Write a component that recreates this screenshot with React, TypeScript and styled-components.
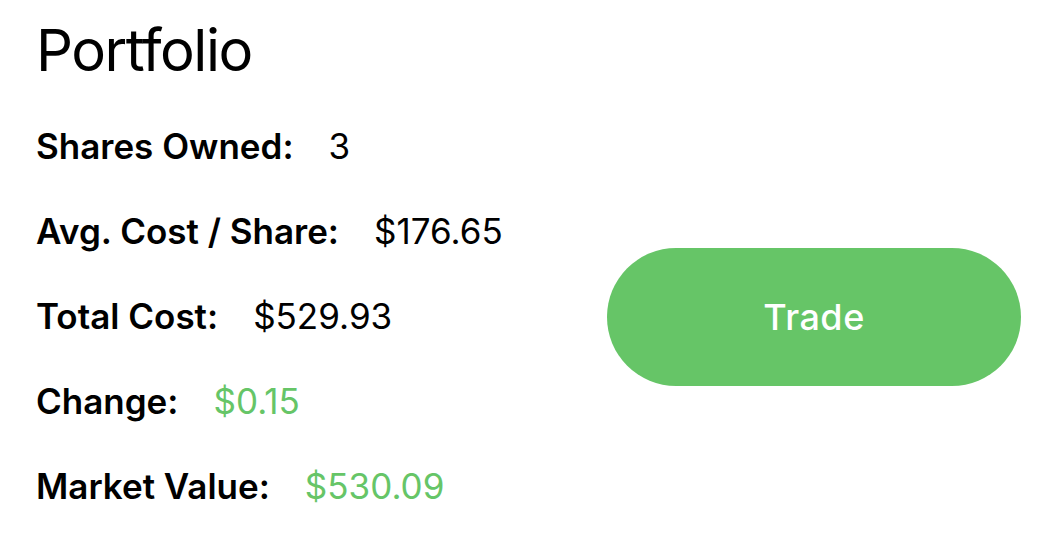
import React from "react";
import styled, { createGlobalStyle } from "styled-components";

const Global = createGlobalStyle`
  html, body { margin: 0; padding: 0; background: #ffffff; }
  body { font-family: Inter, "Noto Sans", "Liberation Sans", sans-serif; color: #000; }
`;

const Page = styled.div`
  width: 1048px;
  height: 534px;
  box-sizing: border-box;
  padding: 16px 27px 0 36px;
  display: flex;
  flex-direction: column;
`;

const Title = styled.h1`
  margin: 0;
  font-size: 58px;
  font-weight: 400;
  line-height: 68px;
  letter-spacing: -1.5px;
`;

const Body = styled.div`
  display: flex;
  align-items: center;
  justify-content: space-between;
  margin-top: 42px;
`;

const List = styled.div`
  display: flex;
  flex-direction: column;
  gap: 44px;
`;

const Row = styled.div`
  display: flex;
  align-items: baseline;
  gap: 35px;
  font-size: 35px;
  line-height: 41px;
`;

const Label = styled.span`
  font-weight: 600;
`;

const Value = styled.span<{ $positive?: boolean }>`
  font-weight: 400;
  color: ${(p) => (p.$positive ? "#66c567" : "#000")};
`;

const TradeButton = styled.button`
  width: 414px;
  height: 138px;
  border: none;
  border-radius: 69px;
  background: #66c567;
  color: #fff;
  font-family: inherit;
  font-size: 36px;
  font-weight: 500;
  letter-spacing: 0.5px;
  cursor: pointer;
`;

const rows: { label: string; value: string; positive?: boolean }[] = [
  { label: "Shares Owned:", value: "3" },
  { label: "Avg. Cost / Share:", value: "$176.65" },
  { label: "Total Cost:", value: "$529.93" },
  { label: "Change:", value: "$0.15", positive: true },
  { label: "Market Value:", value: "$530.09", positive: true },
];

export default function App() {
  return (
    <>
      <Global />
      <Page>
        <Title>Portfolio</Title>
        <Body>
          <List>
            {rows.map((r) => (
              <Row key={r.label}>
                <Label>{r.label}</Label>
                <Value $positive={r.positive}>{r.value}</Value>
              </Row>
            ))}
          </List>
          <TradeButton>Trade</TradeButton>
        </Body>
      </Page>
    </>
  );
}
